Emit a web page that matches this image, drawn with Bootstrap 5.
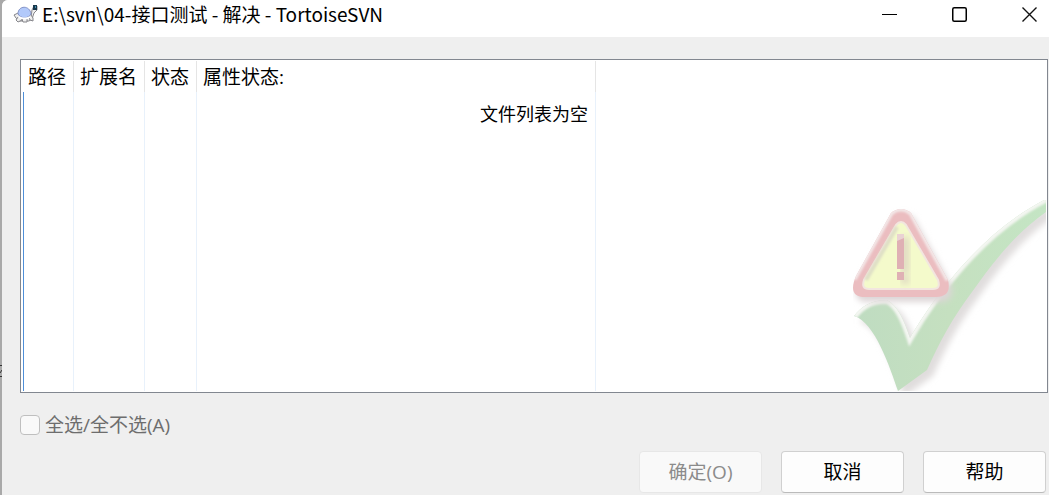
<!DOCTYPE html>
<html lang="zh-CN">
<head>
<meta charset="utf-8">
<meta name="viewport" content="width=device-width, initial-scale=1">
<title>E:\svn\04-接口测试 - 解决 - TortoiseSVN</title>
<link rel="stylesheet" href="https://cdn.jsdelivr.net/npm/bootstrap@5.3.0/dist/css/bootstrap.min.css">
<style>
body { font-family: "Open Sans", "Noto Sans CJK SC", sans-serif; font-size: 19px; line-height: 24px; color: #000; background: #a9a9a9; }
.dialog { margin-left: 2px; background: #efefef; border-top-left-radius: 6px; overflow: hidden; }
.titlebar { height: 37px; background: #fff; padding: 0 2px 9px 11px; }
.titlebar h1 { font-size: 19px; line-height: 24px; font-weight: 400; font-family: "Noto Sans CJK SC", sans-serif; }
.winbtn { width: 36px; height: 30px; border: 0; background: none; }
.controls { gap: 34px; }
.content { padding: 22px 1px 2px 18px; }
.filelist { background: #fff; border: 1px solid #828790; height: 334px; padding: 1px; position: relative; }
.filelist table { width: 574px; height: 100%; table-layout: fixed; border-collapse: separate; border-spacing: 0; position: relative; }
.filelist th { height: 31px; padding: 0 0 0 6px; font-weight: 400; white-space: nowrap; border-right: 1px solid #e5e5e5; vertical-align: middle; }
.filelist td { padding: 10px 7px 0 0; font-size: 18px; text-align: right; vertical-align: top; border-right: 1px solid #e8f1fb; }
.filelist td:first-child { box-shadow: inset 1px 0 #fff, inset 2px 0 #4f8fd8; }
.watermark { position: absolute; right: 1px; bottom: 1px; }
.selectall { margin-top: 20px; gap: 5px; }
.selectall input.form-check-input { width: 20px; height: 20px; margin: 0; background: #f9f9f9; border: 1px solid #bfbfbf; border-radius: 4px; opacity: 1; }
.selectall input.form-check-input:disabled ~ label.form-check-label { color: #6d6d6d; opacity: 1; }
.actions { gap: 19px; padding-right: 2px; margin-top: 14px; }
.actions .btn { width: 123px; height: 42px; padding: 0; font-size: 19px; line-height: 24px; color: #000; background: #fdfdfd; border: 1px solid #d0d0d0; border-bottom-color: #bbb; border-radius: 4px; }
.actions .btn:disabled { color: #8b8b8b; background: #f9f9f9; border-color: #e7e7e7; opacity: 1; }
.backdrop { position: absolute; left: 0; top: 364px; }
</style>
</head>
<body>
<svg class="backdrop" width="2" height="14" aria-hidden="true"><path d="M0 1.5h2M0 12.5h2M0 9l2-3" stroke="#333" fill="none"/></svg>
<main class="dialog min-vh-100">
  <header class="titlebar d-flex align-items-center">
    <svg class="flex-shrink-0" width="25" height="22" viewBox="0 0 25 22" aria-hidden="true">
      <g stroke="#85858a" stroke-width="1" fill="#eee">
        <path d="M1 12l4-2 2 3 11 1 1-7 2-4 3 0v4l-3 3-2 6-3 2H6l-3-3z"/>
        <path d="M5 14l-2 3 2 2 4-2 1-3M9 16l1 3h4v-4M16 14l1 3 3 1v-3l-2-3"/>
      </g>
      <path d="M5 11c0-9 12-9 13 0-3 5-10 5-13 0z" fill="#b2c9fa" stroke="#8292c7"/>
      <path d="M6 14c3 2 8 2 11 0" stroke="#fff" stroke-width="2" fill="none"/>
      <path d="M20 2h4v5h-4z" fill="#18364a"/><path d="M22 3h1v2h-1z" fill="#4090b0"/>
    </svg>
    <h1 class="mb-0 ms-1 me-auto text-nowrap">E:\svn\04-接口测试 - 解决 - TortoiseSVN</h1>
    <div class="controls d-flex">
      <button class="winbtn p-0 d-flex align-items-center justify-content-center" type="button" aria-label="最小化"><svg width="15" height="15"><path d="M0 7.5h15" stroke="#000"/></svg></button>
      <button class="winbtn p-0 d-flex align-items-center justify-content-center" type="button" aria-label="最大化"><svg width="15" height="15"><rect x=".75" y=".75" width="13.5" height="13.5" rx="1.5" fill="none" stroke="#000" stroke-width="1.5"/></svg></button>
      <button class="winbtn p-0 d-flex align-items-center justify-content-center" type="button" aria-label="关闭"><svg width="15" height="15"><path d="M.5.5l14 14m0-14l-14 14" stroke="#111" stroke-width="1.4"/></svg></button>
    </div>
  </header>
  <div class="content">
    <section class="filelist">
      <svg class="watermark" width="193" height="191" viewBox="0 0 193 191" aria-hidden="true">
        <defs>
          <filter id="shade" x="-10%" y="-10%" width="125%" height="125%"><feGaussianBlur stdDeviation="3"/></filter>
          <filter id="soft"><feGaussianBlur stdDeviation="1.2"/></filter>
          <linearGradient id="green" x1="0" x2="1"><stop offset="0" stop-color="#bfdcc1"/><stop offset=".5" stop-color="#c5e0c0"/><stop offset="1" stop-color="#c4e5c4"/></linearGradient>
          <path id="tick" d="M1 116C8 107 17 100 34 100C45 106 51 120 57 138C80 98 128 32 193-1V12C160 35 136 68 119 92C100 117 86 143 74 170L45 191C37 168 22 122 1 116Z"/>
          <path id="tri" d="M38 13q10-8 20 0L95 80q4 17-12 17H12Q-6 97 3 76z"/>
          <clipPath id="tickclip"><use href="#tick"/></clipPath>
          <clipPath id="triclip"><use href="#tri"/></clipPath>
        </defs>
        <use href="#tick" x="6" y="6" fill="#e0dddd" filter="url(#shade)"/>
        <use href="#tick" fill="url(#green)"/>
        <g clip-path="url(#tickclip)"><path d="M1 116C8 107 17 100 34 100C45 106 51 120 57 138C80 98 128 32 193-1" fill="none" stroke="#f4f6f2" stroke-width="7" filter="url(#soft)"/></g>
        <use href="#tri" x="3" y="5" fill="#ddd6d7" filter="url(#shade)"/>
        <use href="#tri" fill="#ebbdc0"/>
        <g clip-path="url(#triclip)"><path d="M1 79L38 13q10-8 20 0L95 80" fill="none" stroke="#f3e8e8" stroke-width="5" filter="url(#soft)"/></g>
        <path d="M43 25q5-6 10 0L85 80q3 9-5 9H16q-8 0-5-9z" fill="#f4facb" stroke="#f2e6df" stroke-width="2"/>
        <path d="M44 27L13 80" stroke="#dfdfc6" stroke-width="4" filter="url(#soft)"/>
        <path d="M48 37h8v36h-8zM48 75h8v9h-8z" fill="#dfd9c2" filter="url(#shade)"/>
        <path d="M44 34h7v35h-7zM44 72h7v8h-7z" fill="#dfb0b4"/><path d="M44 34h7v4l-7 3z" fill="#ead2d3"/>
      </svg>
      <table>
        <colgroup><col style="width:52px"><col style="width:71px"><col style="width:52px"><col></colgroup>
        <thead><tr><th scope="col">路径</th><th scope="col">扩展名</th><th scope="col">状态</th><th scope="col">属性状态:</th></tr></thead>
        <tbody><tr><td></td><td></td><td></td><td>文件列表为空</td></tr></tbody>
      </table>
    </section>
    <div class="selectall d-flex align-items-center">
      <input class="form-check-input" type="checkbox" id="all" disabled>
      <label class="form-check-label" for="all">全选/全不选(A)</label>
    </div>
    <div class="actions d-flex justify-content-end">
      <button class="btn" type="button" disabled>确定(O)</button>
      <button class="btn" type="button">取消</button>
      <button class="btn" type="button">帮助</button>
    </div>
  </div>
</main>
<script src="https://cdn.jsdelivr.net/npm/bootstrap@5.3.0/dist/js/bootstrap.bundle.min.js"></script>
</body>
</html>
